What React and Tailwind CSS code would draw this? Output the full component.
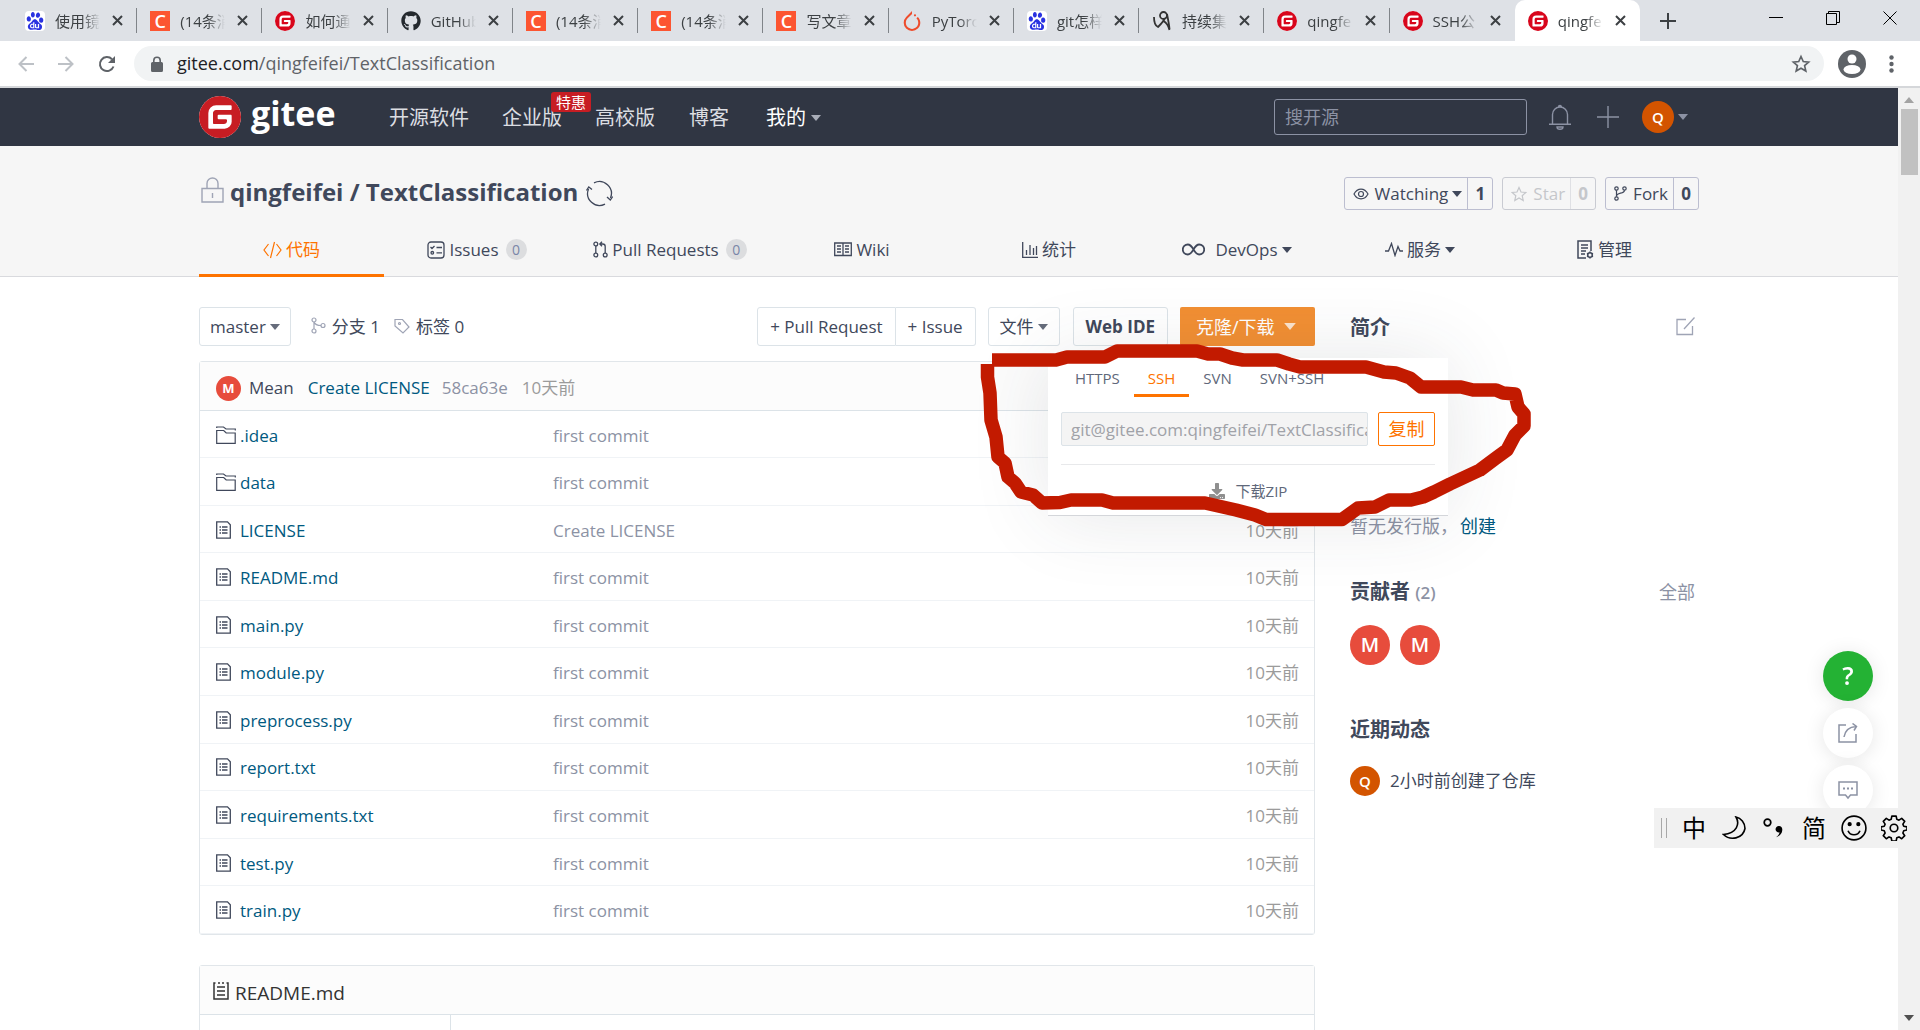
import React from "react";
import { FaGithub, FaDownload } from "react-icons/fa";
import { SiGitee, SiBaidu, SiPytorch } from "react-icons/si";

const TABS = [
  { icon: "baidu", title: "使用镜" },
  { icon: "csdn", title: "(14条消" },
  { icon: "gitee", title: "如何通" },
  { icon: "github", title: "GitHub" },
  { icon: "csdn", title: "(14条消" },
  { icon: "csdn", title: "(14条消" },
  { icon: "csdn", title: "写文章" },
  { icon: "pytorch", title: "PyTorc" },
  { icon: "baidu", title: "git怎样" },
  { icon: "sketch", title: "持续集" },
  { icon: "gitee", title: "qingfe" },
  { icon: "gitee", title: "SSH公" },
  { icon: "gitee", title: "qingfe", active: true },
];

const FILES = [
  { name: ".idea", folder: true, msg: "first commit" },
  { name: "data", folder: true, msg: "first commit" },
  { name: "LICENSE", msg: "Create LICENSE" },
  { name: "README.md", msg: "first commit" },
  { name: "main.py", msg: "first commit" },
  { name: "module.py", msg: "first commit" },
  { name: "preprocess.py", msg: "first commit" },
  { name: "report.txt", msg: "first commit" },
  { name: "requirements.txt", msg: "first commit" },
  { name: "test.py", msg: "first commit" },
  { name: "train.py", msg: "first commit" },
];

function Svg({ className = "", box = "0 0 24 24", sw = 1.5, children }) {
  return (
    <svg viewBox={box} className={"shrink-0 " + className} fill="none" stroke="currentColor" strokeWidth={sw} aria-hidden="true">
      {children}
    </svg>
  );
}

const Caret = ({ className = "" }) => (
  <svg viewBox="0 0 10 6" className={"h-[6px] w-[10px] shrink-0 " + className} fill="currentColor" aria-hidden="true">
    <path d="M0 0h10L5 6z" />
  </svg>
);

function Favicon({ kind }) {
  if (kind === "csdn")
    return <span className="flex size-5 shrink-0 items-center justify-center bg-[#fc5531] text-[18px] font-semibold leading-none text-white">C</span>;
  if (kind === "gitee")
    return (
      <span className="size-5 shrink-0 rounded-full bg-white">
        <SiGitee className="size-5 text-[#d8061c]" />
      </span>
    );
  if (kind === "github") return <FaGithub className="size-5 shrink-0 text-[#24292e]" />;
  if (kind === "pytorch") return <SiPytorch className="size-5 shrink-0 text-[#ee4c2c]" />;
  if (kind === "baidu")
    return (
      <span className="flex size-5 shrink-0 items-center justify-center rounded-sm bg-white">
        <SiBaidu className="size-[18px] text-[#2932e1]" />
      </span>
    );
  return (
    <Svg className="size-5 text-[#333]" box="0 0 20 20" sw={1.8}>
      <path d="M2 6c0 5 1.500 9 4 10 3-3 5-5 6.500-8M17.500 19c-1-4-2.500-7-6-9" />
      <circle cx="11.500" cy="4.500" r="3.500" />
      <path d="M15 3c1 5 2 10 2.500 15" />
    </Svg>
  );
}

function BrowserTab({ tab, separator }) {
  return (
    <div
      className={
        "relative flex h-[41px] min-w-0 flex-1 items-center pl-[13px] pr-[14px] " + (tab.active ? "rounded-t-[10px] bg-white" : "")
      }
    >
      <Favicon kind={tab.icon} />
      <span className="ml-[10px] min-w-0 flex-1 overflow-hidden whitespace-nowrap text-[15px] leading-5 text-[#3c4043] [mask-image:linear-gradient(to_right,black_60%,transparent)]">
        {tab.title}
      </span>
      <button aria-label="关闭标签页" className="ml-[12px] text-[#3c4043]">
        <Svg className="size-[11px]" box="0 0 11 11" sw={2}>
          <path d="M1 1l9 9M10 1l-9 9" />
        </Svg>
      </button>
      {separator && <span className="absolute right-0 top-2 h-[25px] w-px bg-[#808489]" />}
    </div>
  );
}

function BrowserChrome() {
  return (
    <div className="shrink-0 bg-white">
      <div className="flex h-[41px] bg-[#dee1e6]">
        <div className="flex min-w-0 flex-1 pl-[12px]">
          {TABS.map((t, i) => (
            <BrowserTab key={i} tab={t} separator={i < TABS.length - 2} />
          ))}
        </div>
        <div className="flex w-[280px] items-center pl-[20px] text-[#3c4043]">
          <button aria-label="新标签页">
            <Svg className="size-4" box="0 0 16 16" sw={2}>
              <path d="M8 0v16M0 8h16" />
            </Svg>
          </button>
          <div className="mb-[6px] ml-auto flex items-center gap-[43px] pr-[23px] text-black">
            <button aria-label="最小化">
              <Svg className="size-[14px]" box="0 0 14 14" sw={1}>
                <path d="M0 6.500h14" />
              </Svg>
            </button>
            <button aria-label="还原">
              <Svg className="size-[14px]" box="0 0 14 14" sw={1}>
                <path d="M.5 2.500h10v11H.5zM2.500 2.500V.5h11v11H11" />
              </Svg>
            </button>
            <button aria-label="关闭">
              <Svg className="size-[14px]" box="0 0 14 14" sw={1}>
                <path d="M.5.5l13 13M13.500.5l-13 13" />
              </Svg>
            </button>
          </div>
        </div>
      </div>
      <div className="flex h-[45px] items-center pl-[18px] pr-[26px] text-[#5f6368]">
        <button aria-label="后退" className="text-[#bdc1c6]">
          <Svg className="size-4" box="0 0 16 16" sw={2}>
            <path d="M16 8H2M8.500 1L1.500 8l7 7" />
          </Svg>
        </button>
        <button aria-label="前进" className="ml-6 text-[#bdc1c6]">
          <Svg className="size-4" box="0 0 16 16" sw={2}>
            <path d="M0 8h14M7.500 1l7 7-7 7" />
          </Svg>
        </button>
        <button aria-label="重新加载" className="ml-6">
          <Svg className="size-[18px]" box="0 0 18 18" sw={2}>
            <path d="M15.500 11.500A7 7 0 1 1 14 4.200" />
            <path d="M17 1v7h-7z" fill="currentColor" stroke="none" />
          </Svg>
        </button>
        <div className="ml-[18px] flex h-[35px] flex-1 items-center rounded-full bg-[#f1f3f4] pl-[17px] pr-[13px]">
          <svg viewBox="0 0 12 16" className="h-4 w-3" fill="#5f6368" aria-hidden="true">
            <path d="M1.500 6H2V4.500a4 4 0 0 1 8 0V6h.5A1.500 1.500 0 0 1 12 7.500v7a1.500 1.500 0 0 1-1.500 1.500h-9A1.500 1.500 0 0 1 0 14.500v-7A1.500 1.500 0 0 1 1.500 6zM3.600 6h4.800V4.500a2.400 2.400 0 0 0-4.800 0z" />
          </svg>
          <span className="ml-[14px] flex-1 pb-[2px] text-[18px] leading-6">
            <span className="text-[#202124]">gitee.com</span>/qingfeifei/TextClassification
          </span>
          <button aria-label="收藏">
            <Svg className="size-5" sw={2}>
              <path d="M12 3l2.700 6 6.500.7-4.900 4.300 1.500 6.400L12 17l-5.800 3.400 1.500-6.400-4.900-4.300 6.500-.7z" />
            </Svg>
          </button>
        </div>
        <button aria-label="用户" className="ml-[14px]">
          <svg viewBox="0 0 28 28" className="size-7" aria-hidden="true">
            <circle cx="14" cy="14" r="14" fill="#5f6368" />
            <circle cx="14" cy="9" r="4.500" fill="#fff" />
            <ellipse cx="14" cy="19.500" rx="8.500" ry="4.500" fill="#fff" />
          </svg>
        </button>
        <button aria-label="菜单" className="ml-[23px]">
          <svg viewBox="0 0 5 18" className="h-[18px] w-[5px]" fill="#5f6368" aria-hidden="true">
            <circle cx="2.500" cy="2.500" r="2.200" />
            <circle cx="2.500" cy="9" r="2.200" />
            <circle cx="2.500" cy="15.500" r="2.200" />
          </svg>
        </button>
      </div>
      <div className="h-[2px] bg-[#d5d7da]" />
    </div>
  );
}

function SiteHeader() {
  return (
    <header className="bg-[#303643]">
      <div className="mx-auto flex h-[58px] w-full max-w-[1500px] items-center">
        <a href="#" className="flex items-center text-white">
          <span className="size-[42px] rounded-full bg-white">
            <SiGitee className="size-[42px] text-[#c71d23]" />
          </span>
          <span className="mb-[9px] ml-[10px] w-[84px] text-[34px] font-bold leading-10">gitee</span>
        </a>
        <nav className="ml-[54px] flex items-center pt-[2px] text-[20px] leading-7 text-[#dcdee2]">
          <a href="#">开源软件</a>
          <a href="#" className="relative ml-[33px]">
            企业版
            <span className="absolute -top-[12px] left-[49px] flex h-5 w-10 items-center justify-center rounded-[3px] bg-[#c71d23] text-[15px] leading-5 text-white">
              特惠
            </span>
          </a>
          <a href="#" className="ml-[33px]">高校版</a>
          <a href="#" className="ml-[34px]">博客</a>
          <a href="#" className="ml-[37px] flex items-center text-white">
            我的
            <Caret className="ml-[5px] text-[#a9adb8]" />
          </a>
        </nav>
        <input
          aria-label="搜开源"
          placeholder="搜开源"
          className="ml-auto h-9 w-[253px] rounded-[3px] border border-[#8c92a4] bg-transparent px-[10px] text-[18px] text-white placeholder:text-[#8c92a4]"
        />
        <button aria-label="通知" className="ml-[22px] text-[#8c92a4]">
          <Svg className="h-[26px] w-[22px]" box="0 0 22 26" sw={1.4}>
            <path d="M3.500 20V10.500a7.500 7.500 0 0 1 15 0V20M0 20.300h22M9.500 3a1.500 1.500 0 1 1 3 0M8 23h6c0 3-6 3-6 0z" />
          </Svg>
        </button>
        <button aria-label="新建" className="ml-[26px] text-[#8c92a4]">
          <Svg className="size-[22px]" box="0 0 22 22" sw={1.4}>
            <path d="M11 0v22M0 11h22" />
          </Svg>
        </button>
        <button className="ml-[23px] mr-[11px] flex items-center text-[#8c92a4]">
          <span className="flex size-8 items-center justify-center rounded-full bg-[#d35400] text-[15px] font-semibold text-white">Q</span>
          <Caret className="ml-[4px]" />
        </button>
      </div>
    </header>
  );
}

const ICONS = {
  code: (
    <Svg className="h-[18px] w-[19px]" box="0 0 19 18" sw={1.2}>
      <path d="M5.500 3L1 9l4.500 6M13.500 3L18 9l-4.500 6M11.500 1l-4 16" />
    </Svg>
  ),
  issues: (
    <Svg className="size-[18px]" box="0 0 18 18" sw={1.3}>
      <rect x="1" y="1" width="16" height="16" rx="3" />
      <path d="M3.500 6l1.500 1.500L7.500 5M9.500 6.500H15M9.500 11.800H15" />
      <circle cx="5.300" cy="11.800" r="1.300" />
    </Svg>
  ),
  pr: (
    <Svg className="h-[17px] w-[15px]" box="0 0 15 17" sw={1.3}>
      <circle cx="2.800" cy="3" r="1.900" />
      <circle cx="2.800" cy="14" r="1.900" />
      <circle cx="12.200" cy="14" r="1.900" />
      <path d="M2.800 5v7M12.200 12V5.500c0-1.500-1-2.500-2.500-2.500H7M9 .8L6.800 3 9 5.200" />
    </Svg>
  ),
  wiki: (
    <Svg className="h-[15px] w-[18px]" box="0 0 18 15" sw={1.3}>
      <path d="M.7 1h16.600v12.500H.7zM9 1v13M3 4h4M3 7h4M3 10h4M11 4h4M11 7h4M11 10h4" />
    </Svg>
  ),
  stats: (
    <Svg className="h-4 w-4" box="0 0 16 16" sw={1.3}>
      <path d="M.7 0v15.300H16M4.500 13V8M8 13V3M11.500 13V6M14.500 13V4" />
    </Svg>
  ),
  devops: (
    <Svg className="mr-[6px] h-[13px] w-[23px]" box="0 0 23 13" sw={1.8}>
      <path d="M11.500 6.500C9.500 3 8 1.500 5.800 1.500a5 5 0 0 0 0 10c2.200 0 3.700-1.500 5.700-5s3.500-5 5.700-5a5 5 0 0 1 0 10c-2.200 0-3.700-1.500-5.700-5z" />
    </Svg>
  ),
  service: (
    <Svg className="h-[15px] w-[18px]" box="0 0 18 15" sw={1.3}>
      <path d="M0 9h3.500L6.500 1.500l3.500 12 3-9L15 9h3" />
    </Svg>
  ),
  manage: (
    <Svg className="h-[19px] w-[17px]" box="0 0 17 19" sw={1.5}>
      <path d="M9 18H1V1h13v10M4 5h7M4 8h7M4 11h5M4 14h4" />
      <circle cx="13" cy="15" r="2.300" />
      <path d="M13 11.500v1.200M13 17.300v1.200M10 13.300l1 .6M15 16.100l1 .6M16 13.300l-1 .6M11 16.100l-1 .6" />
    </Svg>
  ),
};

const REPO_TABS = [
  { icon: "code", label: "代码", active: true },
  { icon: "issues", label: "Issues", count: 0 },
  { icon: "pr", label: "Pull Requests", count: 0 },
  { icon: "wiki", label: "Wiki" },
  { icon: "stats", label: "统计" },
  { icon: "devops", label: "DevOps", caret: true },
  { icon: "service", label: "服务", caret: true },
  { icon: "manage", label: "管理" },
];

function StatButton({ icon, label, count, caret, muted }) {
  return (
    <button
      className={
        "flex h-[33px] items-center rounded-[3px] border bg-[#f6f6f6] pl-2 text-[17px] leading-6 " +
        (muted ? "border-[#c9cbd2] text-[#c5c7cb]" : "border-[#bcbed0] text-[#40485b]")
      }
    >
      {icon}
      <span className="ml-[6px]">{label}</span>
      {caret && <Caret className="ml-[4px] h-[5px] w-[8px]" />}
      <span
        className={"ml-[5px] flex h-full w-[25px] items-center justify-center border-l font-bold " + (muted ? "border-[#dfe0e4]" : "border-[#bcbed0]")}
      >
        {count}
      </span>
    </button>
  );
}

function RepoHeader() {
  return (
    <section className="border-b border-[#d9dade] bg-[#f6f6f6]">
      <div className="mx-auto w-full max-w-[1500px] pt-[31px] text-[#40485b]">
        <div className="flex h-[33px] items-center">
          <Svg className="mb-[8px] ml-[2px] h-[26px] w-[23px] text-[#9fa4b5]" box="0 0 23 26" sw={1.4}>
            <path d="M1 11.500h21v13.500H1zM6 11.500V6.500a5.500 5.500 0 0 1 11 0v5M11.500 16v5" />
          </Svg>
          <h1 className="mb-[4px] ml-[6px] text-[24px] font-bold leading-8">
            <a href="#">qingfeifei</a> / <a href="#">TextClassification</a>
          </h1>
          <button aria-label="刷新" className="ml-[8px]">
            <Svg className="size-[27px]" box="0 0 27 27" sw={1.3}>
              <path d="M8 2.800A12 12 0 0 1 24.500 18M19 24.200A12 12 0 0 1 2.500 9" />
              <path d="M21 17l3.300 3 2.400-3.500M6 9.500L2.800 7 .5 10.500" />
            </Svg>
          </button>
          <div className="ml-auto flex gap-[9px]">
            <StatButton
              icon={
                <Svg className="h-3 w-4" box="0 0 16 12" sw={1.2}>
                  <path d="M1 6c3.500-6.500 10.500-6.500 14 0-3.500 6.500-10.500 6.500-14 0z" />
                  <circle cx="8" cy="6" r="2.500" />
                </Svg>
              }
              label="Watching"
              count={1}
              caret
            />
            <StatButton
              icon={
                <Svg className="size-4" box="0 0 16 16" sw={1.2}>
                  <path d="M8 1.500l2 4.500 4.800.5-3.600 3.200 1 4.800L8 12l-4.200 2.500 1-4.800L1.200 6.500 6 6z" />
                </Svg>
              }
              label="Star"
              count={0}
              muted
            />
            <StatButton
              icon={
                <Svg className="h-[15px] w-[13px]" box="0 0 13 15" sw={1.2}>
                  <circle cx="2.500" cy="2.500" r="1.700" />
                  <circle cx="10.500" cy="2.500" r="1.700" />
                  <circle cx="2.500" cy="12.500" r="1.700" />
                  <path d="M2.500 4.200v6.600M10.500 4.200c0 4-8 2-8 6" />
                </Svg>
              }
              label="Fork"
              count={0}
            />
          </div>
        </div>
        <nav className="mt-[11px] grid grid-cols-[185fr_186fr_200fr_184fr_190fr_186fr_180fr_189fr]">
          {REPO_TABS.map((t) => (
            <a
              key={t.label}
              href="#"
              className={
                "-mb-px flex h-[56px] items-center justify-center gap-[4px] whitespace-nowrap border-b-[3px] pt-[4px] text-[17px] leading-6 " +
                (t.active ? "border-[#fe7300] text-[#fe7300]" : "border-transparent")
              }
            >
              {ICONS[t.icon]}
              <span>{t.label}</span>
              {t.caret && <Caret className="h-[6px] w-[9px]" />}
              {t.count !== undefined && (
                <span className="ml-[3px] flex size-[21px] items-center justify-center rounded-full bg-[#dcdddf] text-[14px] leading-5 text-[#7a86a8]">
                  {t.count}
                </span>
              )}
            </a>
          ))}
        </nav>
      </div>
    </section>
  );
}

const BTN = "flex h-[39px] items-center whitespace-nowrap rounded-[3px] border border-[#dce3e8] bg-white text-[17px] leading-6";

function ClonePanel() {
  return (
    <div className="absolute right-[-133px] top-[51px] z-10 w-[400px] border-b border-[#d4d6da] bg-white px-[13px] pb-[14px] shadow-[0_0_80px_rgba(48,54,67,0.12)]">
      <div className="flex text-[15px] leading-5 text-[#60687a]">
        {["HTTPS", "SSH", "SVN", "SVN+SSH"].map((p) => (
          <button
            key={p}
            className={"h-[39px] border-b-[3px] px-[14px] pt-[3px] " + (p === "SSH" ? "border-[#fe7300] text-[#fe7300]" : "border-transparent")}
          >
            {p}
          </button>
        ))}
      </div>
      <div className="mt-[15px] flex gap-[10px]">
        <input
          aria-label="仓库地址"
          readOnly
          defaultValue="git@gitee.com:qingfeifei/TextClassification.git"
          className="h-[34px] min-w-0 flex-1 rounded-[2px] border border-[#dce3e8] bg-[#f4f4f4] pl-[9px] text-[17px] text-[#a0a2a8]"
        />
        <button className="h-[34px] w-[57px] rounded-[2px] border border-[#fe7300] text-[18px] leading-6 text-[#fe7300]">复制</button>
      </div>
      <div className="mt-[18px] border-t border-[#e8e9eb] pt-[16px]">
        <a href="#" className="flex items-center justify-center gap-[11px] text-[15px] leading-5 text-[#60687a]">
          <FaDownload className="size-4 text-[#8f8f8f]" />
          下载ZIP
        </a>
      </div>
      <svg
        viewBox="960 330 580 210"
        className="pointer-events-none absolute -left-[88px] -top-[28px] h-[210px] w-[580px] max-w-none"
        fill="none"
        stroke="#c21a00"
        strokeWidth="13.500"
        strokeLinejoin="round"
        aria-hidden="true"
      >
        <path d="M992 360H1056L1067 357H1105L1117 351H1197L1208 354L1220 354L1232 358L1243 360H1277L1289 364L1300 367H1366L1384 372L1396 373L1410 378L1421 387H1461L1473 390H1496L1503 393L1515 394L1518 407L1524 414L1524 426L1515 435L1507 450L1496 458L1480 470L1465 477L1450 484L1434 492L1423 497L1411 500H1389L1375 507L1358 508L1342 519.500H1266L1255 515L1236 510L1205 503H1113L1102 500H1071L1060 502.500L1042 503L1033 495L1021 492L1015 483L1008 477L1005 463L998 457L996 437L991 420L990 393L987.500 377V364" />
      </svg>
    </div>
  );
}

function Toolbar() {
  return (
    <div className="flex items-center text-[#40485b]">
      <button className={BTN + " px-[10px]"}>
        master
        <Caret className="ml-[4px] h-[5px] w-[8px] opacity-80" />
      </button>
      <a href="#" className="ml-[20px] flex items-center gap-[6px] text-[17px] leading-6">
        <Svg className="mb-[2px] h-[17px] w-[15px] text-[#9fa4b5]" box="0 0 15 17" sw={1.2}>
          <circle cx="3" cy="3" r="2" />
          <circle cx="3" cy="14" r="2" />
          <circle cx="12" cy="8.500" r="2" />
          <path d="M3 5v7M3 5c1 2.500 3 3.500 7 3.500" />
        </Svg>
        分支 1
      </a>
      <a href="#" className="ml-[14px] flex items-center gap-[6px] text-[17px] leading-6">
        <Svg className="mb-[2px] size-4 text-[#9fa4b5]" box="0 0 16 16" sw={1.2}>
          <path d="M1 1.500h7.500L15 9l-6 6L1 8z" />
          <circle cx="5.500" cy="5.500" r="1" />
        </Svg>
        标签 0
      </a>
      <div className="ml-auto flex">
        <button className={BTN + " rounded-r-none px-[12px]"}>+ Pull Request</button>
        <button className={BTN + " rounded-l-none border-l-0 px-[12px]"}>+ Issue</button>
      </div>
      <button className={BTN + " ml-[12px] px-[11px]"}>
        文件
        <Caret className="ml-[4px] h-[6px] w-[9px] opacity-80" />
      </button>
      <button className={BTN + " ml-[13px] px-[12px] font-bold"}>Web IDE</button>
      <div className="relative ml-[12px]">
        <button className="flex h-[39px] w-[135px] items-center rounded-[2px] bg-[#f28f33] pl-[16px] text-[18px] leading-6 text-white">
          克隆/下载
          <Caret className="ml-[9px] h-[7px] w-[12px] text-[#fbe3cd]" />
        </button>
        <ClonePanel />
      </div>
    </div>
  );
}

const FolderIcon = () => (
  <Svg className="mb-[2px] h-[18px] w-5 text-[#40485b]" box="0 0 20 18" sw={1.2}>
    <path d="M.7 17.300V4.500h7l2.500 2.500h9v10.300zM.7 2V1h6.800L10 3h9.300v1.500" />
  </Svg>
);
const FileIcon = () => (
  <Svg className="mb-[2px] h-[18px] w-[15px] text-[#40485b]" box="0 0 15 18" sw={1.3}>
    <path d="M.7.8h10.800l2.800 3v13.400H.7zM3.500 6h1.500M3.500 9h1.500M3.500 12h1.500M6 6h5.500M6 9h5.500M6 12h5.500" />
  </Svg>
);

function FileBox() {
  return (
    <div className="mt-[15px] rounded-[3px] border border-[#e1e6ea]">
      <div className="flex h-[49px] items-center border-b border-[#dce3e8] bg-[#fcfcfc] pl-4 pt-1 text-[17px] leading-6">
        <span className="flex size-[25px] items-center justify-center rounded-full bg-[#e74c3c] text-[13px] font-bold text-white">M</span>
        <a href="#" className="ml-[8px] text-[#40485b]">Mean</a>
        <a href="#" className="ml-[14px] text-[#005980]">Create LICENSE</a>
        <a href="#" className="ml-[12px] text-[#8c92a4]">58ca63e</a>
        <span className="ml-[14px] text-[#9b9b9b]">10天前</span>
      </div>
      <table className="h-[523px] w-full text-[17px] leading-6">
        <tbody>
          {FILES.map((f) => (
            <tr key={f.name} className="border-b border-[#f0f3f6]">
              <td className="w-[353px] pl-4 pt-[3px]">
                <a href="#" className={"flex items-center text-[#005980] " + (f.folder ? "gap-1" : "gap-[9px]")}>
                  {f.folder ? <FolderIcon /> : <FileIcon />}
                  {f.name}
                </a>
              </td>
              <td className="pt-[3px] text-[#8c92a4]">{f.msg}</td>
              <td className="pr-[15px] pt-[3px] text-right text-[#9b9b9b]">10天前</td>
            </tr>
          ))}
        </tbody>
      </table>
    </div>
  );
}

function Sidebar() {
  return (
    <aside className="ml-[35px] w-[349px] shrink-0 text-[#40485b]">
      <div className="flex h-[39px] items-center justify-between pr-1">
        <h2 className="pt-[3px] text-[20px] font-bold leading-7">简介</h2>
        <button aria-label="编辑" className="text-[#9fa4b5]">
          <Svg className="size-[19px]" box="0 0 19 19" sw={1.3}>
            <path d="M10 2.500H1v15h15.500V9M18.500.5L8 12" />
          </Svg>
        </button>
      </div>
      <p className="mt-[168px] text-[18px] leading-6 text-[#8c92a4]">
        暂无发行版，<a href="#" className="ml-[2px] text-[#005980]">创建</a>
      </p>
      <div className="mt-[42px] flex h-6 items-center justify-between pr-1 text-[18px]">
        <h2 className="text-[20px] font-bold leading-6">
          贡献者 <span className="text-[17px] font-semibold text-[#8c92a4]">(2)</span>
        </h2>
        <a href="#" className="text-[#8c92a4]">全部</a>
      </div>
      <div className="mt-[21px] flex gap-[10px]">
        {[0, 1].map((i) => (
          <a key={i} href="#" className="flex size-10 items-center justify-center rounded-full bg-[#e74c3c] text-[20px] font-semibold text-white">
            M
          </a>
        ))}
      </div>
      <h2 className="mt-[53px] text-[20px] font-bold leading-6">近期动态</h2>
      <div className="mt-[24px] flex items-center gap-[10px] text-[17px] leading-6">
        <span className="flex size-[30px] items-center justify-center rounded-full bg-[#d35400] text-[15px] font-semibold text-white">Q</span>
        2小时前创建了仓库
      </div>
    </aside>
  );
}

function Scrollbar() {
  return (
    <div className="flex w-[22px] shrink-0 flex-col items-center bg-[#f1f1f1] py-[9px] text-[#a3a3a3]">
      <Caret className="rotate-180" />
      <div className="mt-[6px] h-[66px] w-[17px] bg-[#c1c1c1]" />
      <Caret className="mt-auto text-[#505050]" />
    </div>
  );
}

function FloatingTools() {
  const round = "flex size-[50px] items-center justify-center rounded-full shadow-[0_2px_20px_rgba(0,0,0,0.1)]";
  return (
    <div className="fixed right-[47px] top-[651px] flex flex-col gap-[7px] text-[#8c92a4]">
      <button className={round + " bg-[#24b234] text-[25px] font-semibold text-white"}>?</button>
      <button aria-label="分享" className={round + " bg-white"}>
        <Svg className="size-5" box="0 0 20 20" sw={1.5}>
          <path d="M8 2H1v17h17v-8M6 14C7 8 10 4 18 3.500M14.500.5L18.500 3.500 16 7.500" />
        </Svg>
      </button>
      <button aria-label="评论" className={round + " bg-white"}>
        <Svg className="size-5" box="0 0 20 20" sw={1.5}>
          <path d="M1 2h18v13h-6.500L10 18l-2.500-3H1z" />
          <path d="M5 8.500h2M9 8.500h2M13 8.500h2" strokeWidth="2" />
        </Svg>
      </button>
    </div>
  );
}

function ImeBar() {
  return (
    <div className="fixed right-0 top-[808px] z-20 flex h-10 w-[266px] items-center bg-[#f1f1f1] pl-[7px] pr-[6px] text-[24px] leading-none text-black">
      <span className="h-5 w-[6px] border-x border-[#a8a8a8]" />
      <div className="ml-[7px] grid flex-1 grid-cols-6 items-center justify-items-center">
        <span>中</span>
        <Svg className="size-6" sw={1.6}>
          <path d="M14 1c4 7 1 16-12.500 17.500C8 25 21 23 23 12.500 23 7 19 2 14 1z" />
        </Svg>
        <Svg className="size-6" sw={1.7}>
          <circle cx="5.500" cy="6.500" r="3.300" />
          <path d="M17 10a3.200 3.200 0 1 0 .5 6.300c-.2 2-1.500 3.700-3.500 5 4-1.300 6.300-4 6.300-7.800C20.300 11.500 19 10 17 10z" fill="currentColor" stroke="none" />
        </Svg>
        <span>简</span>
        <Svg className="size-[26px]" sw={1.5}>
          <circle cx="12" cy="12" r="11" />
          <path d="M6.500 14.500c2 5 9 5 11 0" />
          <circle cx="8" cy="8.500" r="1.200" fill="currentColor" />
          <circle cx="16" cy="8.500" r="1.200" fill="currentColor" />
        </Svg>
        <Svg className="size-[26px]" sw={1.5}>
          <circle cx="12" cy="12" r="3.500" />
          <path
            strokeLinejoin="round"
            d="M10 1h4l.6 3 2 .8 2.500-1.700 2.800 2.800-1.700 2.500.8 2 3 .6v2.800l-3 .8-.8 2 1.700 2.500-2.800 2.800-2.500-1.700-2 .8-.6 3h-4l-.6-3-2-.8-2.500 1.700-2.800-2.800 1.700-2.500-.8-2-3-.8v-2.800l3-.6.8-2-1.700-2.500 2.800-2.800 2.500 1.700 2-.8z"
          />
        </Svg>
      </div>
    </div>
  );
}

export default function App() {
  return (
    <div className="flex h-screen flex-col overflow-hidden bg-white font-['Open_Sans','Noto_Sans_CJK_SC',sans-serif]">
      <BrowserChrome />
      <div className="flex min-h-0 flex-1">
        <div className="min-w-0 flex-1 overflow-hidden">
          <SiteHeader />
          <RepoHeader />
          <main className="mx-auto flex w-full max-w-[1500px] items-start pt-[30px]">
            <div className="min-w-0 flex-1">
              <Toolbar />
              <FileBox />
              <section className="mt-[30px] rounded-[3px] border border-[#e1e6ea]">
                <h2 className="flex h-[49px] items-center gap-[6px] border-b border-[#dce3e8] bg-[#fcfcfc] pl-[13px] pt-[5px] text-[19px] leading-6 text-[#333]">
                  <Svg className="mb-[3px] h-[18px] w-4" box="0 0 16 18" sw={1.5}>
                    <path d="M2.500 1H1v16h14V1h-1.500M5 1h2M9 1h2M4 5h8M4 9h8M4 13h8" />
                  </Svg>
                  README.md
                </h2>
                <div className="flex h-10">
                  <div className="w-[251px] border-r border-[#dce3e8]" />
                </div>
              </section>
            </div>
            <Sidebar />
          </main>
        </div>
        <Scrollbar />
      </div>
      <FloatingTools />
      <ImeBar />
    </div>
  );
}
